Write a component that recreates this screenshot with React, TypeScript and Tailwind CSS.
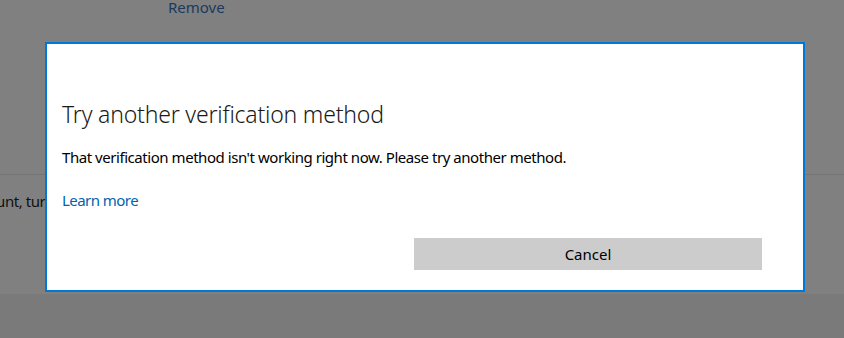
import React from 'react'

const font = { fontFamily: '"Segoe UI", "Noto Sans", Lato, sans-serif' }

const Dialog = () => {
  return (
    <div className="absolute left-[45px] top-[42px] w-[760px] h-[250px] bg-white border-2 border-[#0078d7] flex flex-col px-[15px]">
      <h1 className="mt-[54px] text-[23px] leading-[32px] font-light text-[#1a1a1a] tracking-[-0.2px]">
        Try another verification method
      </h1>
      <p className="mt-[17px] text-[15px] leading-[20px] text-black tracking-[-0.45px]">
        That verification method isn't working right now. Please try another method.
      </p>
      <a href="#" className="mt-[23px] w-fit text-[15px] leading-[20px] text-[#0063b1] tracking-[-0.55px]">
        Learn more
      </a>
      <div className="mt-[28px] flex justify-end pr-[26px]">
        <button className="w-[348px] h-[32px] bg-[#cccccc] text-[15px] text-black">Cancel</button>
      </div>
    </div>
  )
}

export default function App() {
  return (
    <div className="relative w-[844px] h-[338px] overflow-hidden bg-[#808080]" style={font}>
      <div className="flex flex-col h-full">
        <div className="h-[174px] pl-[168px]">
          <a href="#" className="block -mt-[3px] text-[15px] leading-[20px] text-[#1b3a5e]">Remove</a>
        </div>
        <div className="h-px bg-[#747474]" />
        <div className="h-[119px] pt-[16px]">
          <p className="-ml-[34px] text-[15px] leading-[20px] text-[#111] tracking-[-0.45px]">account, turn on</p>
        </div>
        <div className="flex-1 bg-[#7a7a7a]" />
      </div>
      <Dialog />
    </div>
  )
}
